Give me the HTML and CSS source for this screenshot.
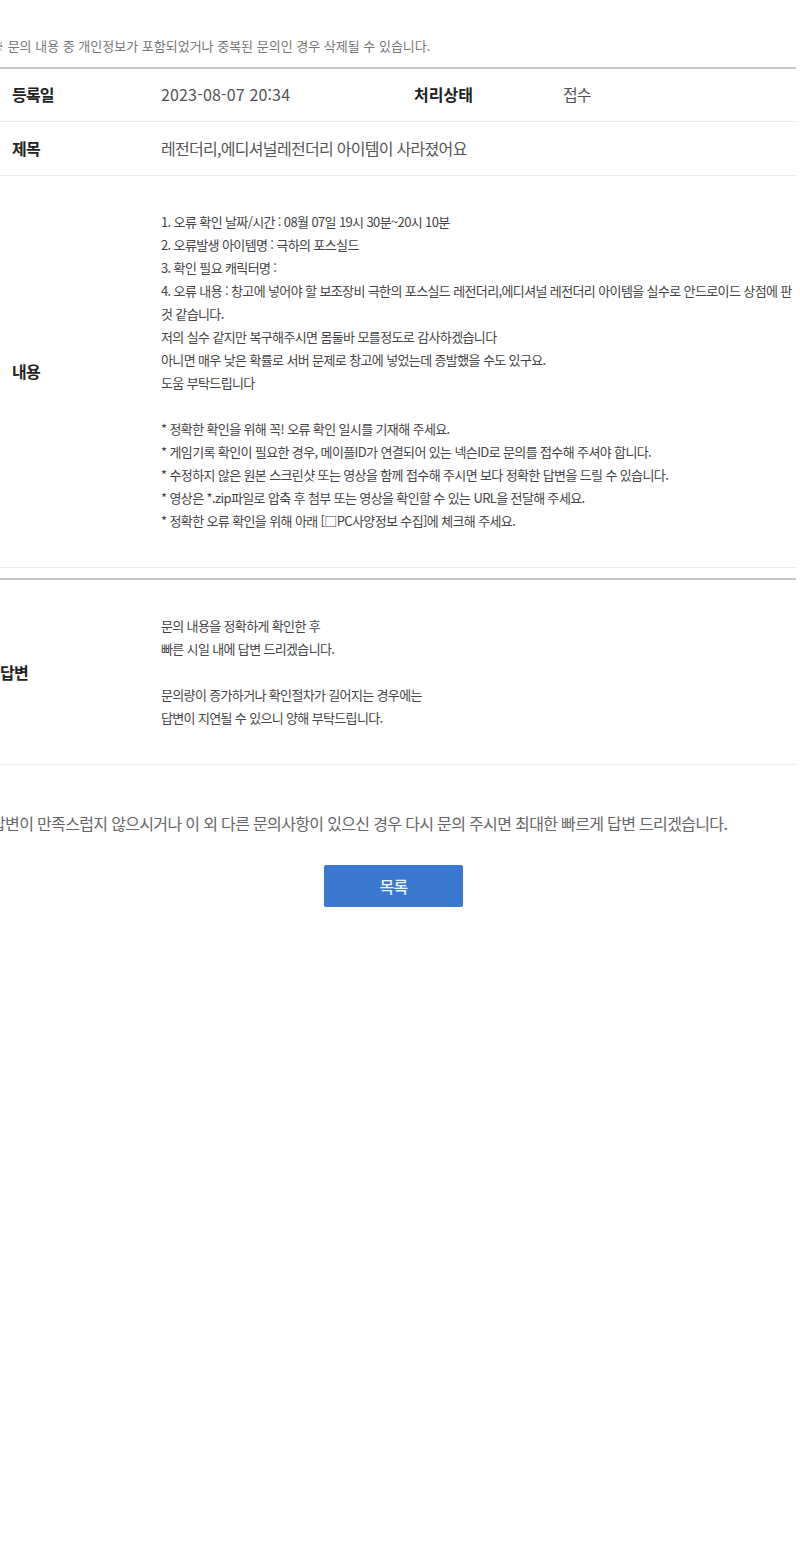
FILE: index.html
```html
<!DOCTYPE html>
<html lang="ko">
<head>
<meta charset="utf-8">
<title>문의 상세</title>
<link rel="stylesheet" href="styles.css">
</head>
<body>
<div class="page">
  <p class="notice">※ 문의 내용 중 개인정보가 포함되었거나 중복된 문의인 경우 삭제될 수 있습니다.</p>

  <div class="board">
    <div class="row row-meta">
      <div class="label">등록일</div>
      <div class="value value-date">2023-08-07 20:34</div>
      <div class="label label-inline">처리상태</div>
      <div class="value">접수</div>
    </div>
    <div class="row row-title">
      <div class="label">제목</div>
      <div class="value value-title">레전더리,에디셔널레전더리 아이템이 사라졌어요</div>
    </div>
    <div class="row row-body">
      <div class="label">내용</div>
      <div class="text">1. 오류 확인 날짜/시간 : 08월 07일 19시 30분~20시 10분<br>2. 오류발생 아이템명 : 극하의 포스실드<br>3. 확인 필요 캐릭터명 :<br>4. 오류 내용 : 창고에 넣어야 할 보조장비 극한의 포스실드 레전더리,에디셔널 레전더리 아이템을 실수로 안드로이드 상점에 판<br>것 같습니다.<br>저의 실수 같지만 복구해주시면 몸둘바 모를정도로 감사하겠습니다<br>아니면 매우 낮은 확률로 서버 문제로 창고에 넣었는데 증발했을 수도 있구요.<br>도움 부탁드립니다<br><br>* 정확한 확인을 위해 꼭! 오류 확인 일시를 기재해 주세요.<br>* 게임기록 확인이 필요한 경우, 메이플ID가 연결되어 있는 넥슨ID로 문의를 접수해 주셔야 합니다.<br>* 수정하지 않은 원본 스크린샷 또는 영상을 함께 접수해 주시면 보다 정확한 답변을 드릴 수 있습니다.<br>* 영상은 *.zip파일로 압축 후 첨부 또는 영상을 확인할 수 있는 URL을 전달해 주세요.<br>* 정확한 오류 확인을 위해 아래 [□PC사양정보 수집]에 체크해 주세요.</div>
    </div>
  </div>

  <div class="board board-answer">
    <div class="row row-body">
      <div class="label label-answer">답변</div>
      <div class="text text-answer">문의 내용을 정확하게 확인한 후<br>빠른 시일 내에 답변 드리겠습니다.<br><br>문의량이 증가하거나 확인절차가 길어지는 경우에는<br>답변이 지연될 수 있으니 양해 부탁드립니다.</div>
    </div>
  </div>

  <p class="footer-note">답변이 만족스럽지 않으시거나 이 외 다른 문의사항이 있으신 경우 다시 문의 주시면 최대한 빠르게 답변 드리겠습니다.</p>

  <div class="actions">
    <a class="btn" href="#">목록</a>
  </div>
</div>
</body>
</html>
```
FILE: styles.css
```css
html, body {
  margin: 0;
  padding: 0;
  background: #ffffff;
  overflow-x: hidden;
}

body {
  font-family: "Noto Sans CJK KR", "Noto Sans", sans-serif;
  color: #444;
}

.page {
  width: 805px;
  margin-left: -9px;
  padding-top: 36px;
}

.notice {
  margin: 0 0 11px;
  font-size: 13px;
  line-height: 20px;
  color: #777;
  letter-spacing: 0;
  white-space: nowrap;
}

.board {
  border-top: 2px solid #c6c6c6;
}

.board-answer {
  margin-top: 10px;
}

.row {
  display: grid;
  grid-template-columns: 170px 253px 149px 1fr;
  align-items: center;
  border-bottom: 1px solid #ececec;
}

.row-meta {
  height: 53px;
  padding-bottom: 2px;
  box-sizing: border-box;
}

.row-title {
  grid-template-columns: 170px 1fr;
  height: 54px;
  padding-bottom: 2px;
  box-sizing: border-box;
}

.row-body {
  grid-template-columns: 170px 1fr;
  padding: 34px 0 35px;
}

.label {
  padding-left: 21px;
  font-size: 16px;
  font-weight: 700;
  color: #222;
  letter-spacing: -0.05em;
}

.label-inline {
  padding-left: 0;
  letter-spacing: 0;
}

.label-answer {
  padding-left: 9px;
}

.value {
  font-size: 16px;
  color: #555;
  letter-spacing: -0.06em;
}

.value-date {
  letter-spacing: 0.01em;
}

.value-title {
  letter-spacing: -0.044em;
}

.text {
  font-size: 13px;
  line-height: 23px;
  color: #444;
  letter-spacing: -0.048em;
  white-space: nowrap;
  overflow: hidden;
}

.text-answer {
  letter-spacing: -0.05em;
}

.footer-note {
  margin: 46px 0 0;
  font-size: 16px;
  line-height: 24px;
  color: #666;
  letter-spacing: -0.041em;
  white-space: nowrap;
}

.actions {
  display: flex;
  justify-content: center;
  margin-top: 30px;
}

.btn {
  display: flex;
  align-items: center;
  justify-content: center;
  width: 139px;
  height: 42px;
  background: #3b78d0;
  border-radius: 2px;
  color: #eef3fb;
  font-size: 16px;
  font-weight: 500;
  text-decoration: none;
  letter-spacing: -0.05em;
}
```
